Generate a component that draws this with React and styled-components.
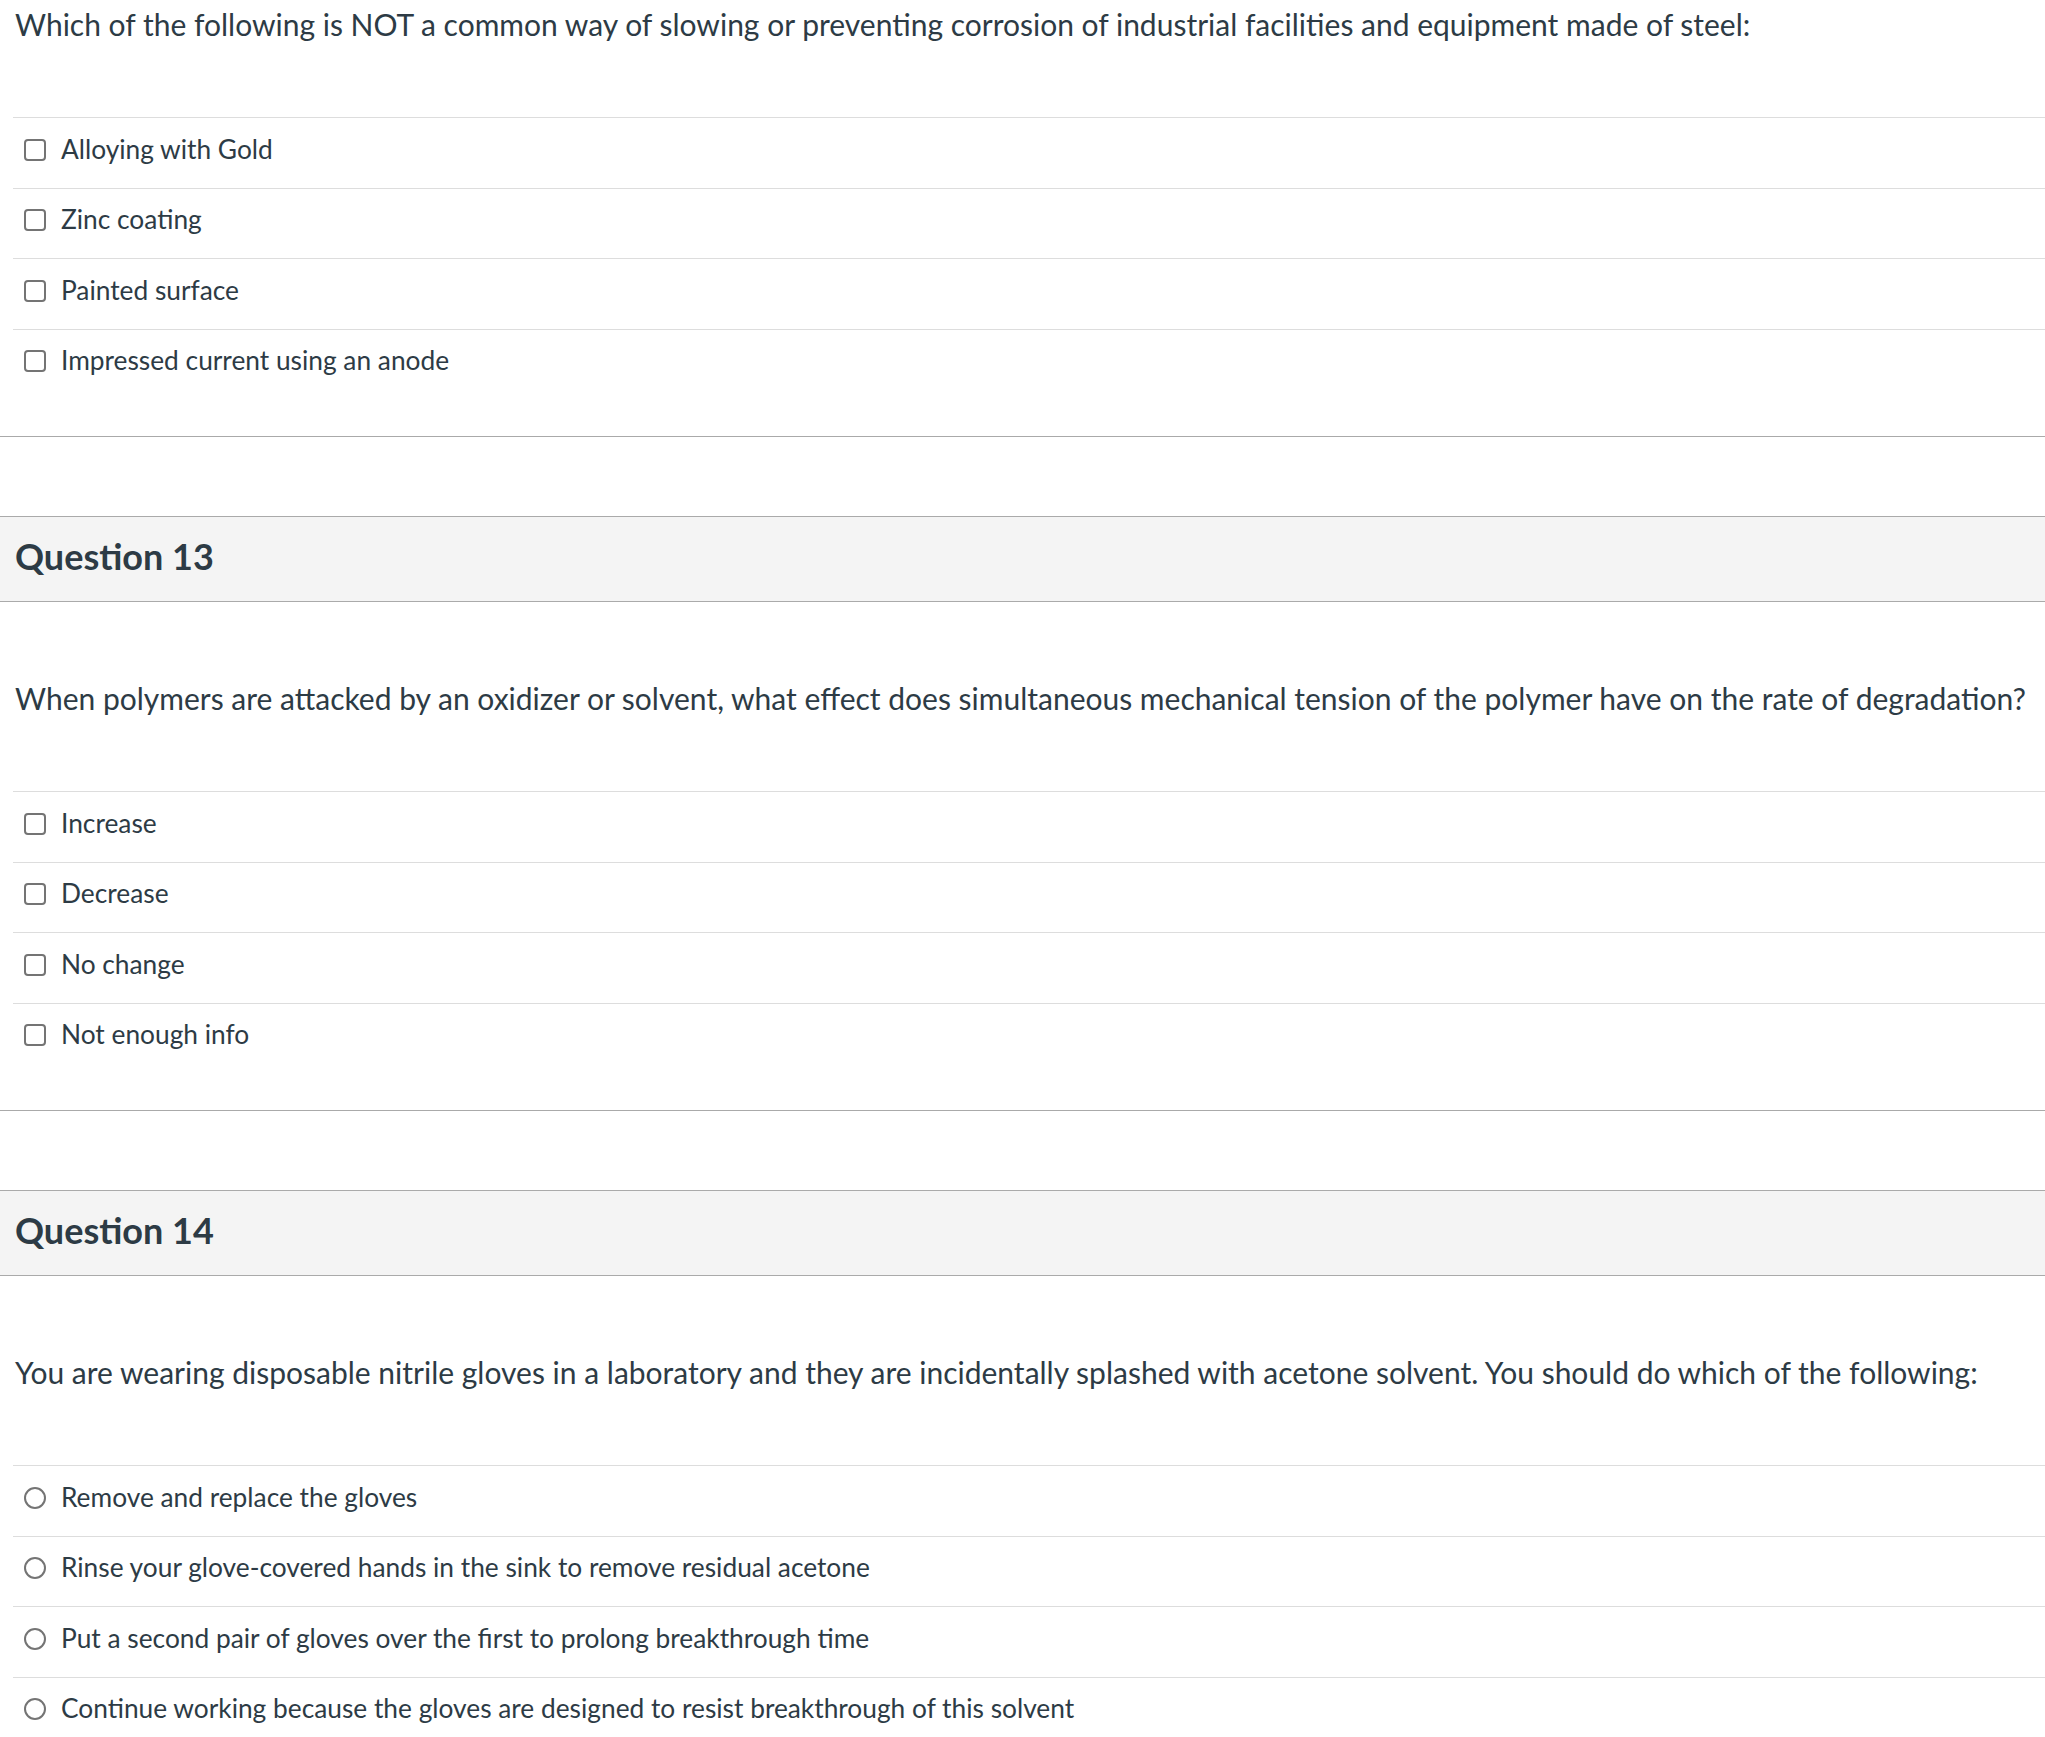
import React from 'react';
import styled, { createGlobalStyle } from 'styled-components';

const GlobalStyle = createGlobalStyle`
  body {
    margin: 0;
    background: #fff;
    font-family: 'Lato', 'Liberation Sans', sans-serif;
    color: #2d3b45;
  }
`;

const QUESTIONS = [
  {
    id: 12,
    cropped: true,
    type: 'checkbox',
    text: 'Which of the following is NOT a common way of slowing or preventing corrosion of industrial facilities and equipment made of steel:',
    answers: ['Alloying with Gold', 'Zinc coating', 'Painted surface', 'Impressed current using an anode'],
  },
  {
    id: 13,
    type: 'checkbox',
    text: 'When polymers are attacked by an oxidizer or solvent, what effect does simultaneous mechanical tension of the polymer have on the rate of degradation?',
    answers: ['Increase', 'Decrease', 'No change', 'Not enough info'],
  },
  {
    id: 14,
    type: 'radio',
    text: 'You are wearing disposable nitrile gloves in a laboratory and they are incidentally splashed with acetone solvent. You should do which of the following:',
    answers: [
      'Remove and replace the gloves',
      'Rinse your glove-covered hands in the sink to remove residual acetone',
      'Put a second pair of gloves over the first to prolong breakthrough time',
      'Continue working because the gloves are designed to resist breakthrough of this solvent',
    ],
  },
];

const Question = ({ q }) => (
  <Block>
    {!q.cropped && (
      <Header>
        <Title>Question {q.id}</Title>
      </Header>
    )}
    <QuestionText $cropped={q.cropped}>{q.text}</QuestionText>
    <Answers>
      {q.answers.map((a) => (
        <Answer key={a}>
          <Control $round={q.type === 'radio'} />
          <AnswerLabel>{a}</AnswerLabel>
        </Answer>
      ))}
    </Answers>
  </Block>
);

const App = () => (
  <>
    <GlobalStyle />
    <Page>
      {QUESTIONS.map((q) => (
        <Question key={q.id} q={q} />
      ))}
    </Page>
  </>
);

const Page = styled.main`
  width: 100%;
  overflow: hidden;
`;

const Block = styled.section`
  border-bottom: 1px solid #aaaaaa;
  margin-bottom: 79px;
`;

const Header = styled.div`
  display: flex;
  align-items: center;
  box-sizing: border-box;
  height: 86px;
  padding: 0 15px 6px;
  background: #f4f4f4;
  border-top: 1px solid #aaaaaa;
  border-bottom: 1px solid #aaaaaa;
`;

const Title = styled.h2`
  margin: 0;
  font-size: 36px;
  font-weight: 700;
  color: #2d3b45;
`;

const QuestionText = styled.p`
  margin: 0 0 72px;
  padding: ${(p) => (p.$cropped ? '3px' : '75px')} 10px 0 15px;
  font-size: 30px;
  line-height: 42px;
  white-space: nowrap;
`;

const Answers = styled.ul`
  list-style: none;
  margin: 0 0 0 13px;
  padding: 0 0 37px;
`;

const Answer = styled.li`
  display: flex;
  align-items: center;
  gap: 15px;
  height: 70.5px;
  box-sizing: border-box;
  padding: 0 0 8px 11px;
  border-top: 1px solid #dddddd;
`;

const Control = styled.span`
  flex: none;
  width: 22px;
  height: 22px;
  margin-top: 2px;
  box-sizing: border-box;
  border: 2px solid #747474;
  border-radius: ${(p) => (p.$round ? '50%' : '4px')};
  background: #fff;
`;

const AnswerLabel = styled.span`
  font-size: 26.3px;
  line-height: 40px;
`;

export default App;
